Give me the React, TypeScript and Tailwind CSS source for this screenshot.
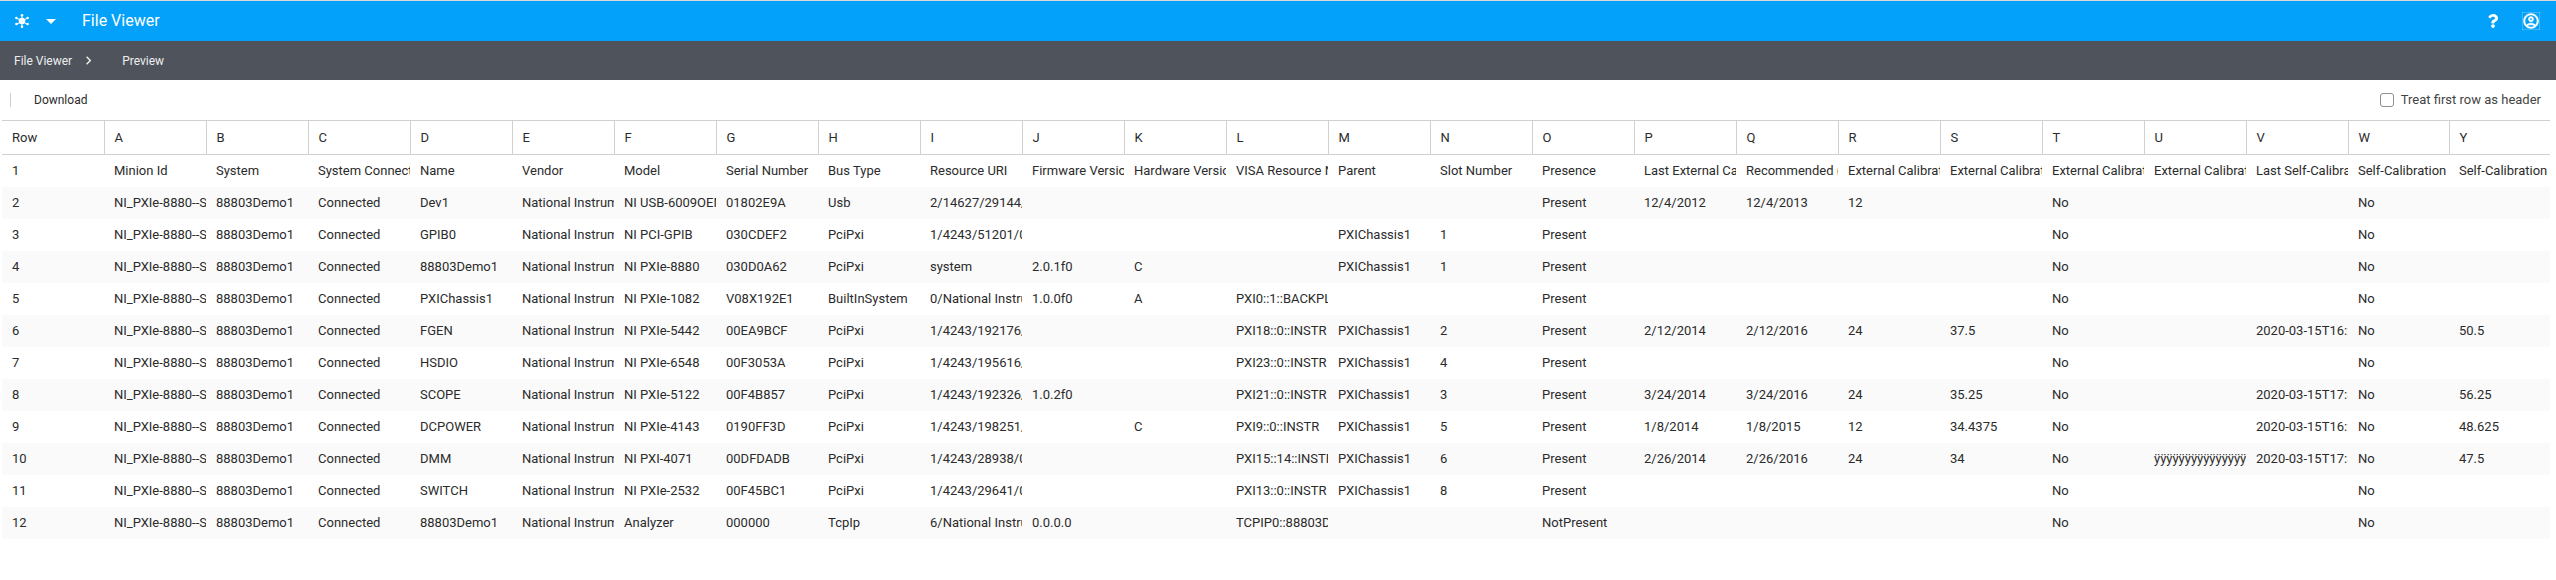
import { FaQuestion } from 'react-icons/fa';
import { MdArrowDropDown, MdChevronRight, MdOutlineAccountCircle } from 'react-icons/md';

const columns = ['A', 'B', 'C', 'D', 'E', 'F', 'G', 'H', 'I', 'J', 'K', 'L', 'M', 'N', 'O', 'P', 'Q', 'R', 'S', 'T', 'U', 'V', 'W', 'Y'];

const titles = [
  'Minion Id', 'System', 'System Connection', 'Name', 'Vendor', 'Model', 'Serial Number', 'Bus Type', 'Resource URI',
  'Firmware Version', 'Hardware Version', 'VISA Resource Name', 'Parent', 'Slot Number', 'Presence',
  'Last External Calibration', 'Recommended (', 'External Calibration Interval', 'External Calibration Temperature',
  'External Calibration Supported', 'External Calibration Checksum', 'Last Self-Calibration', 'Self-Calibration', 'Self-Calibration',
];

const common = ['NI_PXIe-8880--SYSTEM', '88803Demo1', 'Connected'];
const vendor = 'National Instruments';

// name, model, serial, bus, uri, firmware, hardware, visa, parent, slot, presence, last ext, recommended, interval, temp, u, last self, y
const devices = [
  ['Dev1', 'NI USB-6009OEM', '01802E9A', 'Usb', '2/14627/29144/0/0', '', '', '', '', '', 'Present', '12/4/2012', '12/4/2013', '12', '', '', '', ''],
  ['GPIB0', 'NI PCI-GPIB', '030CDEF2', 'PciPxi', '1/4243/51201/0/0', '', '', '', 'PXIChassis1', '1', 'Present', '', '', '', '', '', '', ''],
  ['88803Demo1', 'NI PXIe-8880', '030D0A62', 'PciPxi', 'system', '2.0.1f0', 'C', '', 'PXIChassis1', '1', 'Present', '', '', '', '', '', '', ''],
  ['PXIChassis1', 'NI PXIe-1082', 'V08X192E1', 'BuiltInSystem', '0/National Instruments', '1.0.0f0', 'A', 'PXI0::1::BACKPLANE', '', '', 'Present', '', '', '', '', '', '', ''],
  ['FGEN', 'NI PXIe-5442', '00EA9BCF', 'PciPxi', '1/4243/192176/0/0', '', '', 'PXI18::0::INSTR', 'PXIChassis1', '2', 'Present', '2/12/2014', '2/12/2016', '24', '37.5', '', '2020-03-15T16:20:00', '50.5'],
  ['HSDIO', 'NI PXIe-6548', '00F3053A', 'PciPxi', '1/4243/195616/0/0', '', '', 'PXI23::0::INSTR', 'PXIChassis1', '4', 'Present', '', '', '', '', '', '', ''],
  ['SCOPE', 'NI PXIe-5122', '00F4B857', 'PciPxi', '1/4243/192326/0/0', '1.0.2f0', '', 'PXI21::0::INSTR', 'PXIChassis1', '3', 'Present', '3/24/2014', '3/24/2016', '24', '35.25', '', '2020-03-15T17:30:00', '56.25'],
  ['DCPOWER', 'NI PXIe-4143', '0190FF3D', 'PciPxi', '1/4243/198251/0/0', '', 'C', 'PXI9::0::INSTR', 'PXIChassis1', '5', 'Present', '1/8/2014', '1/8/2015', '12', '34.4375', '', '2020-03-15T16:20:00', '48.625'],
  ['DMM', 'NI PXI-4071', '00DFDADB', 'PciPxi', '1/4243/28938/0/0', '', '', 'PXI15::14::INSTR', 'PXIChassis1', '6', 'Present', '2/26/2014', '2/26/2016', '24', '34', 'ÿÿÿÿÿÿÿÿÿÿÿÿÿÿÿÿÿÿÿÿ', '2020-03-15T17:30:00', '47.5'],
  ['SWITCH', 'NI PXIe-2532', '00F45BC1', 'PciPxi', '1/4243/29641/0/0', '', '', 'PXI13::0::INSTR', 'PXIChassis1', '8', 'Present', '', '', '', '', '', '', ''],
  ['88803Demo1', 'Analyzer', '000000', 'TcpIp', '6/National Instruments', '0.0.0.0', '', 'TCPIP0::88803Demo1', '', '', 'NotPresent', '', '', '', '', '', '', ''],
];

const toRow = (d: string[]) => [
  ...common, d[0], vendor, ...d.slice(1, 14), d[14], 'No', d[15], d[16], 'No', d[17],
];

function Logo() {
  return (
    <svg viewBox="0 0 14 14" className="h-[14px] w-[14px] text-white" fill="currentColor">
      <circle cx="7" cy="7" r="3.3" />
      <circle cx="7" cy="1.3" r="1.3" />
      <circle cx="7" cy="12.7" r="1.3" />
      <circle cx="1.4" cy="4" r="1.3" />
      <circle cx="12.6" cy="4" r="1.3" />
      <circle cx="1.4" cy="10" r="1.3" />
      <circle cx="12.6" cy="10" r="1.3" />
      <path d="M6.5 1.2h1v11.6h-1zM1.6 3.5l11 6.4-.5.8-11-6.4zM12.4 3.5l.5.8-11 6.4-.5-.8z" />
    </svg>
  );
}

export default function App() {
  const rows = [titles, ...devices.map(toRow)];

  return (
    <div className="h-[580px] w-[2556px] overflow-hidden bg-white text-[#2b2b2b] [font-family:Roboto,sans-serif]">
      <div className="h-px bg-[#d8d8d8]" />
      <div className="flex h-[40px] items-center bg-[#03a1f9] text-white">
        <div className="ml-[15px]">
          <Logo />
        </div>
        <MdArrowDropDown className="ml-[10px] text-[24px]" />
        <span className="ml-[19px] text-[16px]">File Viewer</span>
        <FaQuestion className="ml-auto text-[14px]" />
        <MdOutlineAccountCircle className="ml-[22px] mr-[16px] text-[18px] stroke-[0.6px]" />
      </div>
      <div className="flex h-[39px] items-center bg-[#4f535c] text-[12px] text-[#eeeeee]">
        <span className="ml-[14px]">File Viewer</span>
        <MdChevronRight className="ml-[8px] text-[17px]" />
        <span className="ml-[25px]">Preview</span>
      </div>
      <div className="flex h-[40px] items-center">
        <div className="ml-[10px] h-[14px] w-px bg-[#cfcfcf]" />
        <span className="ml-[23px] text-[12px]">Download</span>
        <div className="ml-auto h-[14px] w-[14px] rounded-[3px] border border-[#8f8f8f]" />
        <span className="ml-[7px] mr-[15px] text-[13px] text-[#444444]">Treat first row as header</span>
      </div>
      <table className="ml-[2px] w-[2548px] table-fixed border-collapse text-[13px]">
        <thead>
          <tr className="h-[34px] border-y border-[#d0d0d0]">
            <th className="w-[102px] border-r border-[#d0d0d0] pl-[10px] text-left font-normal">Row</th>
            {columns.map((c, i) => (
              <th
                key={c}
                className={`pl-[10px] text-left font-normal ${i < 22 ? 'w-[102px]' : 'w-[101px]'} ${i < columns.length - 1 ? 'border-r border-[#d0d0d0]' : ''}`}
              >
                {c}
              </th>
            ))}
          </tr>
        </thead>
        <tbody>
          {rows.map((row, r) => (
            <tr key={r} className={`h-[32px] ${r % 2 === 1 ? 'bg-[#fafafa]' : ''}`}>
              <td className="pl-[10px]">{r + 1}</td>
              {row.map((cell, c) => (
                <td key={c} className="overflow-hidden whitespace-nowrap pl-[10px]">
                  {cell}
                </td>
              ))}
            </tr>
          ))}
        </tbody>
      </table>
    </div>
  );
}
